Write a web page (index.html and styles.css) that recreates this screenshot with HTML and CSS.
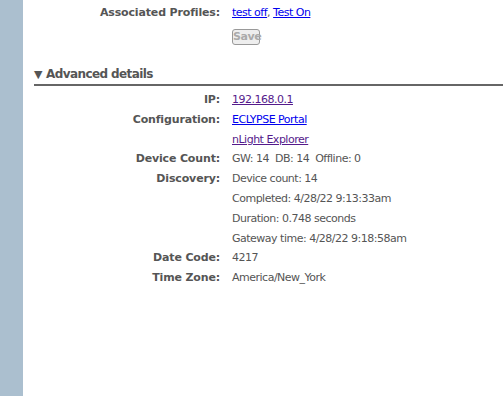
FILE: index.html
```html
<!DOCTYPE html>
<html lang="en">
<head>
  <meta charset="UTF-8">
  <title>Device details</title>
  <link rel="stylesheet" href="styles.css">
</head>
<body>
  <div class="sidebar"></div>

  <div class="main">
    <div class="details">
      <span class="label">Associated Profiles:</span>
      <span class="value"><a href="#" class="link">test off</a>, <a href="#" class="link">Test On</a></span>
      <span class="label"></span>
      <span class="value save-cell"><button class="save" disabled>Save</button></span>
    </div>

    <h2 class="section-title"><span class="arrow">&#9660;</span> Advanced details</h2>

    <div class="details">
      <span class="label">IP:</span>
      <span class="value"><a href="#" class="link visited">192.168.0.1</a></span>

      <span class="label">Configuration:</span>
      <span class="value"><a href="#" class="link">ECLYPSE Portal</a></span>
      <span class="label"></span>
      <span class="value"><a href="#" class="link visited">nLight Explorer</a></span>

      <span class="label">Device Count:</span>
      <span class="value">GW: 14&nbsp; DB: 14&nbsp; Offline: 0</span>

      <span class="label">Discovery:</span>
      <span class="value">Device count: 14</span>
      <span class="label"></span>
      <span class="value">Completed: 4/28/22 9:13:33am</span>
      <span class="label"></span>
      <span class="value">Duration: 0.748 seconds</span>
      <span class="label"></span>
      <span class="value">Gateway time: 4/28/22 9:18:58am</span>

      <span class="label">Date Code:</span>
      <span class="value">4217</span>

      <span class="label">Time Zone:</span>
      <span class="value">America/New_York</span>
    </div>
  </div>
</body>
</html>
```

FILE: styles.css
```css
/* Reset styling */
* {
  margin: 0;
  padding: 0;
  box-sizing: border-box;
}

body {
  font-family: "DejaVu Sans", Verdana, sans-serif;
  font-size: 11px;
  color: #555;
  background: white;
  display: flex;
  min-height: 100vh;
}

.sidebar {
  width: 23px;
  background-color: #abbfcf;
  flex-shrink: 0;
}

.main {
  flex: 1;
  padding: 3px 0 0 11px;
}

.details {
  display: grid;
  grid-template-columns: 186px 1fr;
  grid-auto-rows: 19.8px;
  column-gap: 12px;
  align-items: center;
}

.label {
  font-weight: bold;
  text-align: right;
  letter-spacing: -0.15px;
}

.value {
  letter-spacing: -0.5px;
}

.link {
  color: #0000ee;
}

.link.visited {
  color: #551a8b;
}

.save-cell {
  padding-top: 8px;
}

.save {
  font-family: inherit;
  font-size: 11px;
  font-weight: bold;
  line-height: 13px;
  letter-spacing: -0.4px;
  color: #aaa;
  background: #eee;
  border: 1px solid #999;
  border-radius: 3px;
  padding: 0;
  width: 28px;
  height: 16px;
}

.section-title {
  font-size: 12px;
  font-weight: bold;
  letter-spacing: -0.6px;
  color: #555;
  margin-top: 24px;
  padding-bottom: 3px;
  border-bottom: 2px solid #666;
  margin-bottom: 4px;
}

.arrow {
  font-size: 11px;
  letter-spacing: 0;
}
```
